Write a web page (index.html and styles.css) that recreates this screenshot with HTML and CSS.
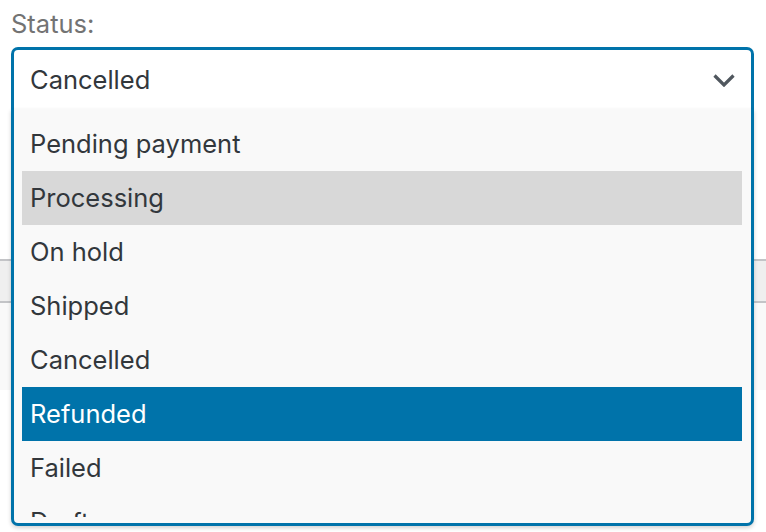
FILE: index.html
```html
<!DOCTYPE html>
<html lang="en">
<head>
<meta charset="utf-8">
<title>Status</title>
<link rel="stylesheet" href="styles.css">
</head>
<body>
  <label class="field-label">Status:</label>
  <div class="combo">
    <div class="selection">
      <span class="selection-text">Cancelled</span>
      <svg class="chevron" width="22" height="13" viewBox="0 0 22 13" aria-hidden="true">
        <polyline points="1.5,1.5 11,11 20.5,1.5" fill="none" stroke="#50575e" stroke-width="3.2"/>
      </svg>
    </div>
    <div class="dropdown">
      <ul class="results">
        <li class="option">Pending payment</li>
        <li class="option option-hover">Processing</li>
        <li class="option">On hold</li>
        <li class="option">Shipped</li>
        <li class="option">Cancelled</li>
        <li class="option option-active">Refunded</li>
        <li class="option">Failed</li>
        <li class="option">Draft</li>
      </ul>
    </div>
  </div>
  <div class="behind">
    <div class="behind-head"></div>
    <div class="behind-row"></div>
  </div>
</body>
</html>
```

FILE: styles.css
```css
* { box-sizing: border-box; }

html, body {
  margin: 0;
  padding: 0;
  background: #ffffff;
}

body {
  font-family: Inter, "Noto Sans", "Liberation Sans", sans-serif;
  font-size: 25.5px;
  color: #32373c;
  height: 532px;
  overflow: hidden;
}

.field-label {
  display: block;
  margin: 9px 0 8px 11px;
  line-height: 30px;
  color: #737373;
}

.combo {
  position: relative;
  margin: 0 12px 0 11px;
}

.selection {
  height: 62px;
  border: 3px solid #0073aa;
  border-bottom: 0;
  border-radius: 7px 7px 0 0;
  background: #ffffff;
  display: flex;
  align-items: center;
  justify-content: space-between;
  padding: 0 16px 0 16px;
}

.selection-text {
  line-height: 30px;
  color: #32373c;
}

.chevron {
  display: block;
  margin-top: 2px;
}

.dropdown {
  position: absolute;
  top: 100%;
  left: 0;
  right: 0;
  z-index: 2;
  background: #f9f9f9;
  border: 3px solid #0073aa;
  border-top: 0;
  border-radius: 0 0 7px 7px;
  padding: 8px 9px 6px 8px;
  box-shadow: 0 2px 4px rgba(0, 0, 0, 0.18);
}

.results {
  list-style: none;
  margin: 0;
  padding: 0;
  height: 400px;
  overflow: hidden;
}

.option {
  height: 54px;
  line-height: 54px;
  padding-left: 8px;
  color: #32373c;
}

.option-hover {
  background: #d8d8d8;
}

.option-active {
  background: #0073aa;
  color: #ffffff;
}

.behind {
  margin-top: 150px;
}

.behind-head {
  height: 44px;
  background: #efefef;
  border-top: 2px solid #c3c4c7;
  border-bottom: 2px solid #c3c4c7;
}

.behind-row {
  height: 87px;
  background: #f9f9f9;
}
```
